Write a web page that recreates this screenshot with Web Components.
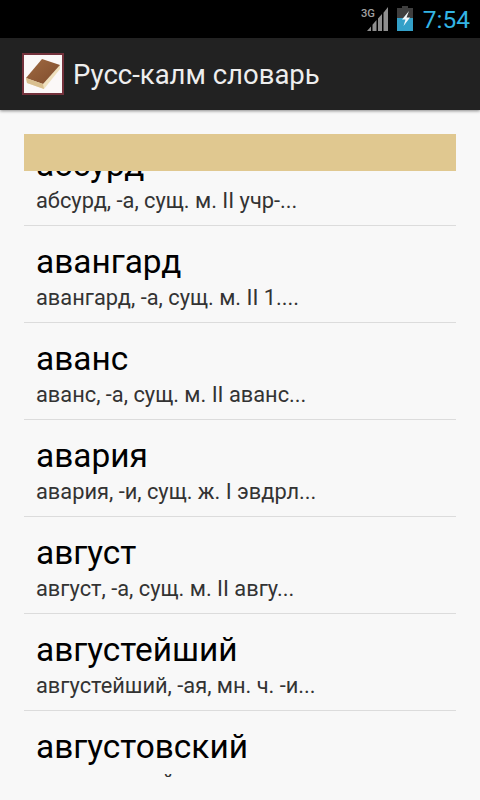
<!DOCTYPE html>
<html><head><meta charset="utf-8"><style>
html,body{margin:0;padding:0;background:#f8f8f8;height:100%;overflow:hidden}
body{font-family:Roboto,"Noto Sans",sans-serif;width:480px;height:800px;display:flex;flex-direction:column}
</style></head><body>
<status-bar></status-bar>
<action-bar>Русс-калм словарь</action-bar>
<word-list>
<word-row word="абсурд" desc="абсурд, -а, сущ. м. II учр-..."></word-row>
<word-row word="авангард" desc="авангард, -а, сущ. м. II 1...."></word-row>
<word-row word="аванс" desc="аванс, -а, сущ. м. II аванс..."></word-row>
<word-row word="авария" desc="авария, -и, сущ. ж. I эвдрл..."></word-row>
<word-row word="август" desc="август, -а, сущ. м. II авгу..."></word-row>
<word-row word="августейший" desc="августейший, -ая, мн. ч. -и..."></word-row>
<word-row word="августовский" desc="августовский, -ая, -ое ..."></word-row>
</word-list>
<script>
function def(name,html){customElements.define(name,class extends HTMLElement{constructor(){super();this.attachShadow({mode:"open"}).innerHTML=html;}})}
def("status-bar",`<style>
:host{display:flex;flex:none;height:38px;background:#000;align-items:center;justify-content:flex-end;box-sizing:border-box;padding-right:10px;color:#33b5e5;font:24.500px Roboto,sans-serif}
svg{display:block}
.b{margin-left:8px;margin-right:10px}
</style>
<svg width="28" height="30" viewBox="0 0 28 30"><text x="0" y="12.500" font-family="Roboto,sans-serif" font-size="11.500" font-weight="500" fill="#a0a0a0" textLength="14" lengthAdjust="spacingAndGlyphs">3G</text>
<path d="M6 27 10 22.400V27ZM11.500 27V20.700L15.500 16V27ZM17 27V14.500L21 10V27ZM22.500 27V8.700L27 3V27Z" fill="#8e8e8e"/></svg>
<svg class="b" width="16" height="26" viewBox="0 0 16 26"><rect x="5" y="0" width="6" height="3" fill="#3f3f3f"/><rect x="0" y="2" width="16" height="10" fill="#3f3f3f"/><rect x="0" y="12" width="16" height="13" fill="#33a0c8"/><path d="M12 5 5 13.500H8.500L6.500 20 13 11.500H9.500Z" fill="#f2f8fb"/></svg>
<span>7:54</span>`);
def("action-bar",`<style>
:host{display:block;flex:none;position:relative;z-index:2;height:72px;background:#222;color:#eee;box-shadow:0 1px 3px rgba(0,0,0,.45)}
.r{display:flex;align-items:center;height:100%;padding-left:22px;gap:9px;font:27.500px Roboto,sans-serif}
.i{width:42px;height:42px;flex:none;display:block}
</style><div class="r">
<svg class="i" viewBox="0 0 42 42"><defs><linearGradient id="c" x1="0" y1="0" x2="1" y2="1"><stop offset="0" stop-color="#a06a42"/><stop offset="1" stop-color="#7f4c2c"/></linearGradient></defs>
<rect x="1" y="1" width="40" height="40" fill="#fbf8f8" stroke="#74323c" stroke-width="2"/>
<path d="M4 25 21 31 38 12 38 16 22 36 5 30Z" fill="#efe0bd"/>
<path d="M4 25 20 6 38 12 21 31Z" fill="url(#c)"/>
<path d="M4 25 21 31 22 36 5 30Z" fill="#d9bf8f"/></svg>
<slot></slot></div>`);
def("word-list",`<style>
:host{display:block;flex:none;position:relative;margin:24px 24px 0;height:643px;overflow:hidden}
.band{position:absolute;left:0;right:0;top:0;height:37px;background:#e0c890;z-index:1}
.in{margin-top:-5px}
</style><div class="band"></div><div class="in"><slot></slot></div>`);
customElements.define("word-row",class extends HTMLElement{constructor(){super();
this.attachShadow({mode:"open"}).innerHTML=`<style>
:host{display:block;box-sizing:border-box;height:97px;padding:0 12px;border-bottom:1px solid #dcdcdc;overflow:hidden}
.w{font:33.400px/38px Roboto,sans-serif;color:#000;padding-top:17px;height:38px}
.d{font:21.800px/26px Roboto,sans-serif;color:#333;margin-top:4px;white-space:nowrap}
</style><div class="w">${this.getAttribute("word")}</div><div class="d">${this.getAttribute("desc")}</div>`}});
</script>
</body></html>
